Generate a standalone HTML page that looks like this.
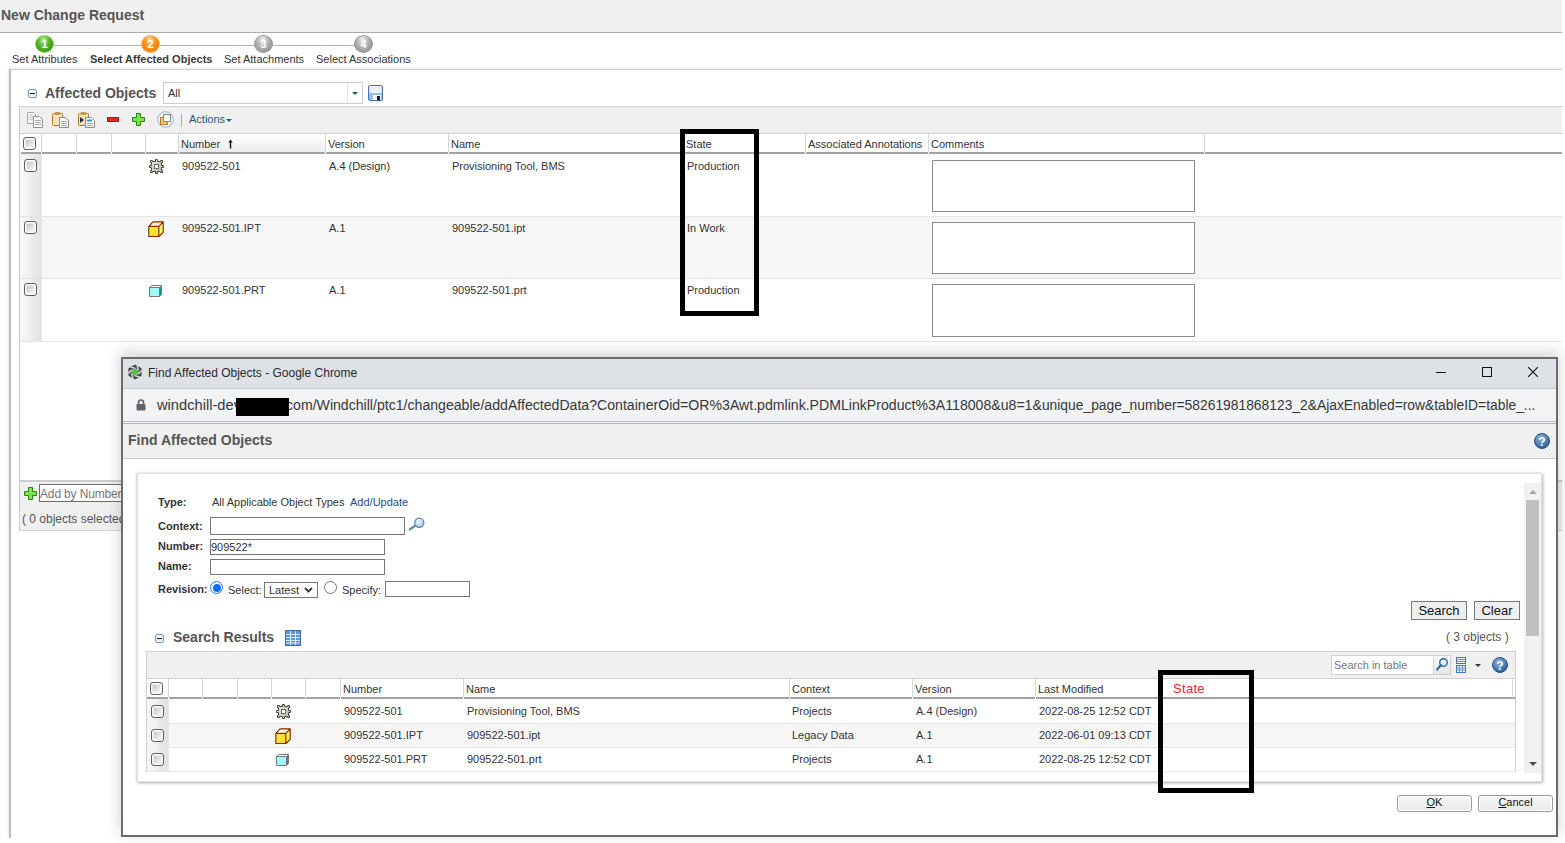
<!DOCTYPE html>
<html><head><meta charset="utf-8">
<style>
*{box-sizing:border-box}
html,body{margin:0;padding:0}
body{width:1565px;height:843px;position:relative;overflow:hidden;background:#fff;font-family:"Liberation Sans",sans-serif;font-size:11px;color:#333}
.a{position:absolute;white-space:nowrap}
.t{line-height:13px}
.cb{position:absolute;width:13px;height:13px;border:1px solid #5f5f5f;border-radius:3px;background:linear-gradient(135deg,#b4b4b4 0%,#dcdcdc 45%,#fdfdfd 100%);box-shadow:inset 0 0 0 1.5px #fff}
.hsep{position:absolute;width:1px;background:#d6d6d6}
.hb{position:absolute;height:3px;background:#a2a2a2;border-bottom:1px solid #dadada}
</style></head><body>
<svg width="0" height="0" style="position:absolute">
<defs>
<symbol id="gear" viewBox="0 0 15 15">
 <defs><linearGradient id="gg" x1="0" y1="0" x2="1" y2="1"><stop offset="0" stop-color="#e6e8e0"/><stop offset="1" stop-color="#b4b9aa"/></linearGradient></defs>
 <path d="M6.5 0.5 L8.5 0.5 L8.5 2.5 L11.5 2.5 L11.5 1.5 L13.5 1.5 L13.5 3.5 L12.5 3.5 L12.5 6.5 L14.5 6.5 L14.5 8.5 L12.5 8.5 L12.5 11.5 L13.5 11.5 L13.5 13.5 L11.5 13.5 L11.5 12.5 L8.5 12.5 L8.5 14.5 L6.5 14.5 L6.5 12.5 L3.5 12.5 L3.5 13.5 L1.5 13.5 L1.5 11.5 L2.5 11.5 L2.5 8.5 L0.5 8.5 L0.5 6.5 L2.5 6.5 L2.5 3.5 L1.5 3.5 L1.5 1.5 L3.5 1.5 L3.5 2.5 L6.5 2.5Z" fill="url(#gg)" stroke="#45453c" stroke-width="1"/>
 <rect x="5.5" y="5.5" width="4" height="4" fill="#fff" stroke="#6d6e62" stroke-width="1"/>
</symbol>
<symbol id="cube" viewBox="0 0 16 16">
 <defs><linearGradient id="cf" x1="0" y1="0" x2="1" y2="1"><stop offset="0" stop-color="#fff04a"/><stop offset="1" stop-color="#f2d21a"/></linearGradient></defs>
 <path d="M0.8 5.5 L5 0.8 L15.2 0.8 L15.2 11.3 L11 16 L0.8 16 Z" fill="url(#cf)"/>
 <path d="M1.3 5.5 L5.2 1.3 L14.5 1.3 L10.8 5.5 Z" fill="#fffbe0"/>
 <path d="M10.8 5.5 L14.7 1.3 L14.7 11.2 L10.8 15.5 Z" fill="#f8ee70"/>
 <path d="M0.8 5.3 L5 0.8 L15.2 0.8 L15.2 11.3 L11 15.5 L0.8 15.5 Z M0.8 5.3 H10.8 V15.5 M10.8 5.3 L15.2 0.8" fill="none" stroke="#8c2800" stroke-width="1.15" stroke-linejoin="round"/>
</symbol>
<symbol id="prt" viewBox="0 0 13 12">
 <path d="M2.5 0.5 H12.5 V9.5 L10.5 11.5 H0.5 V2.5 Z" fill="#9ffcfc"/>
 <path d="M0.8 2.3 L2.5 0.6 H12.3 L10.6 2.3 Z" fill="#fff"/>
 <path d="M10.6 2.3 L12.4 0.6 V9.5 L10.6 11.3 Z" fill="#149a9a"/>
 <path d="M2.5 0.5 H12.5 V9.5 L10.5 11.5 H0.5 V2.5 Z M0.5 2.5 H10.5 V11.5" fill="none" stroke="#777" stroke-width="1"/>
</symbol>
</defs></svg>

<!-- header band -->
<div class="a" style="left:0;top:0;width:1562px;height:33px;background:#f0f0f0;border-bottom:1px solid #ababab"></div>
<div class="a" style="left:1px;top:7px;font-size:14px;font-weight:bold;color:#555;line-height:16px">New Change Request</div>

<!-- wizard -->
<div class="a" style="left:44px;top:45px;width:320px;height:1px;background:#b4b4b4"></div>
<div class="a" style="left:35px;top:35px;width:19px;height:18px;border-radius:50%;border:1px solid #8fd06a;background:radial-gradient(ellipse at 45% 25%,#c8f0a8 0%,#62c032 35%,#3a9e16 70%,#54b820 100%)"></div>
<div class="a" style="left:141px;top:35px;width:19px;height:18px;border-radius:50%;border:1px solid #f8b070;background:radial-gradient(ellipse at 45% 25%,#ffe0b8 0%,#fb9a2a 35%,#f28200 70%,#fbb718 100%)"></div>
<div class="a" style="left:254px;top:35px;width:19px;height:18px;border-radius:50%;border:1px solid #9a9a9a;background:radial-gradient(ellipse at 45% 25%,#f4f4f4 0%,#bdbdbd 35%,#999 70%,#b4b4b4 100%)"></div>
<div class="a" style="left:354px;top:35px;width:19px;height:18px;border-radius:50%;border:1px solid #9a9a9a;background:radial-gradient(ellipse at 45% 25%,#f4f4f4 0%,#bdbdbd 35%,#999 70%,#b4b4b4 100%)"></div>
<div class="a" style="left:35px;top:38px;width:19px;text-align:center;color:#fff;font-weight:bold;font-size:11px;line-height:13px">1</div>
<div class="a" style="left:141px;top:38px;width:19px;text-align:center;color:#fff;font-weight:bold;font-size:11px;line-height:13px">2</div>
<div class="a" style="left:254px;top:38px;width:19px;text-align:center;color:#fff;font-weight:bold;font-size:11px;line-height:13px">3</div>
<div class="a" style="left:354px;top:38px;width:19px;text-align:center;color:#fff;font-weight:bold;font-size:11px;line-height:13px">4</div>
<div class="a t" style="left:12px;top:53px;color:#333">Set Attributes</div>
<div class="a t" style="left:90px;top:53px;color:#3a3a3a;font-weight:bold">Select Affected Objects</div>
<div class="a t" style="left:224px;top:53px;color:#333">Set Attachments</div>
<div class="a t" style="left:316px;top:53px;color:#333">Select Associations</div>

<!-- panel -->
<div class="a" style="left:9px;top:69px;width:1553px;height:769px;border-top:1px solid #cfcfcf;border-left:2px solid #bdbdbd;box-shadow:-1px -1px 2px rgba(0,0,0,.10)"></div>

<!-- panel heading -->
<div class="a" style="left:28px;top:89px;width:9px;height:9px;border:1px solid #6e9cc0;border-radius:2px;background:linear-gradient(#fff 0%,#fff 40%,#d6e8f6 70%,#fff 100%)"></div>
<div class="a" style="left:30px;top:93px;width:5px;height:1px;background:#1a1a1a"></div>
<div class="a" style="left:45px;top:85px;font-size:14px;font-weight:bold;color:#555;line-height:16px">Affected Objects</div>
<div class="a" style="left:163px;top:82px;width:200px;height:22px;border:1px solid #cdcdcd;background:#fff"></div>
<div class="a t" style="left:168px;top:87px;color:#333">All</div>
<div class="a" style="left:347px;top:83px;width:1px;height:20px;background:#e2e2e2"></div>
<div class="a" style="left:352px;top:92px;width:0;height:0;border-left:3px solid transparent;border-right:3px solid transparent;border-top:3px solid #1d5a78"></div>
<!-- save icon -->
<svg class="a" style="left:368px;top:85px" width="15" height="16" viewBox="0 0 15 16"><rect x="0.5" y="0.5" width="14" height="15" rx="1.5" fill="#9ebde6" stroke="#4a76b4"/><rect x="1.5" y="1" width="12" height="7" fill="#fff"/><rect x="2" y="1.5" width="11" height="6" fill="#e9eef7"/><rect x="5" y="10" width="8" height="5" fill="#fff"/><rect x="9" y="11" width="3" height="4.5" fill="#0d1a33"/></svg>

<!-- table frame -->
<div class="a" style="left:19px;top:106px;width:1543px;height:425px;border-left:1px solid #cbcbcb"></div>
<!-- toolbar -->
<div class="a" style="left:20px;top:106px;width:1542px;height:27px;background:#f0f0f0;border-top:1px solid #d0d0d0"></div>
<!-- toolbar icons -->
<svg class="a" style="left:26px;top:112px" width="18" height="16" viewBox="0 0 18 16">
 <path d="M1.5 0.5h6l2 2v9h-8z" fill="#f7f7f7" stroke="#a9a9a9"/><path d="M3 3.5h4M3 5.5h4M3 7.5h4" stroke="#c8c8c8"/><path d="M7.5 4.5h6l3 3v8h-9z" fill="#fff" stroke="#8f8f8f"/><path d="M9 8.5h6M9 10.5h6M9 12.5h6" stroke="#a8a8a8"/>
</svg>
<svg class="a" style="left:52px;top:112px" width="18" height="16" viewBox="0 0 18 16">
 <rect x="0.5" y="1.5" width="10" height="12" rx="1" fill="#f8e2b8" stroke="#b37a2a"/><rect x="3" y="0" width="5" height="3" fill="#c9964a"/><path d="M7.5 5.5h6l3 3v7h-9z" fill="#fff" stroke="#8a8a8a"/><path d="M9 9.5h6M9 11.5h6M9 13.5h6" stroke="#aaa"/>
</svg>
<svg class="a" style="left:78px;top:112px" width="18" height="16" viewBox="0 0 18 16">
 <rect x="0.5" y="1.5" width="10" height="12" rx="1" fill="#f8e2b8" stroke="#b37a2a"/><rect x="3" y="0" width="5" height="3" fill="#c9964a"/><path d="M2 5l4 3-4 3z" fill="#1e2f4a"/><path d="M7.5 5.5h6l3 3v7h-9z" fill="#fff" stroke="#8a8a8a"/><rect x="9" y="7.5" width="5" height="2" fill="#3c8ad6"/><path d="M9 11.5h6M9 13.5h6" stroke="#aaa"/>
</svg>
<div class="a" style="left:107px;top:117px;width:12px;height:5px;background:#e3262b;border:1px solid #b31217"></div>
<svg class="a" style="left:132px;top:113px" width="13" height="13" viewBox="0 0 13 13"><path d="M4.5 0.5h4v4h4v4h-4v4h-4v-4h-4v-4h4z" fill="#7ee34a" stroke="#1d8a16"/></svg>
<svg class="a" style="left:157px;top:111px" width="17" height="17" viewBox="0 0 17 17"><circle cx="8.5" cy="8.5" r="7.8" fill="#eef2f7" stroke="#9ab0c8"/><rect x="3.5" y="6.5" width="7" height="7" fill="#f4c56c" stroke="#b78227"/><rect x="6.5" y="3.5" width="7" height="7" fill="#fff" stroke="#7d8fa5"/></svg>
<div class="a" style="left:181px;top:114px;width:1px;height:13px;background:#8eb3d9"></div>
<div class="a t" style="left:189px;top:113px;color:#2b5682">Actions</div>
<div class="a" style="left:226px;top:119px;width:0;height:0;border-left:3px solid transparent;border-right:3px solid transparent;border-top:3px solid #2b5682"></div>

<!-- header row -->
<div class="a" style="left:20px;top:133px;width:1542px;height:1px;background:#d0d0d0"></div>
<div class="a" style="left:179px;top:134px;width:146px;height:18px;background:linear-gradient(#fff,#ececec)"></div>
<div class="hb" style="left:20px;top:152px;width:1542px"></div>
<div class="hsep" style="left:41px;top:134px;height:20px"></div>
<div class="hsep" style="left:76px;top:134px;height:20px"></div>
<div class="hsep" style="left:111px;top:134px;height:20px"></div>
<div class="hsep" style="left:145px;top:134px;height:20px"></div>
<div class="hsep" style="left:178px;top:134px;height:20px"></div>
<div class="hsep" style="left:325px;top:134px;height:20px"></div>
<div class="hsep" style="left:448px;top:134px;height:20px"></div>
<div class="hsep" style="left:682px;top:134px;height:20px"></div>
<div class="hsep" style="left:805px;top:134px;height:20px"></div>
<div class="hsep" style="left:928px;top:134px;height:20px"></div>
<div class="hsep" style="left:1204px;top:134px;height:20px"></div>
<div class="a" style="left:41px;top:152px;width:1px;height:3px;background:#fff"></div><div class="a" style="left:76px;top:152px;width:1px;height:3px;background:#fff"></div><div class="a" style="left:111px;top:152px;width:1px;height:3px;background:#fff"></div><div class="a" style="left:145px;top:152px;width:1px;height:3px;background:#fff"></div><div class="a" style="left:178px;top:152px;width:1px;height:3px;background:#fff"></div><div class="a" style="left:325px;top:152px;width:1px;height:3px;background:#fff"></div><div class="a" style="left:448px;top:152px;width:1px;height:3px;background:#fff"></div><div class="a" style="left:805px;top:152px;width:1px;height:3px;background:#fff"></div><div class="a" style="left:928px;top:152px;width:1px;height:3px;background:#fff"></div><div class="a" style="left:1204px;top:152px;width:1px;height:3px;background:#fff"></div>
<div class="a" style="left:20px;top:152px;width:1px;height:3px;background:#fff"></div>
<div class="cb" style="left:23px;top:137px"></div>
<div class="a t" style="left:181px;top:138px">Number</div>
<svg class="a" style="left:228px;top:139px" width="5" height="10" viewBox="0 0 5 10"><path d="M2.5 0.5L0.3 3.5H1.8V9.5H3.2V3.5H4.7Z" fill="#111"/></svg>
<div class="a t" style="left:328px;top:138px">Version</div>
<div class="a t" style="left:451px;top:138px">Name</div>
<div class="a t" style="left:686px;top:138px">State</div>
<div class="a t" style="left:808px;top:138px">Associated Annotations</div>
<div class="a t" style="left:931px;top:138px">Comments</div>

<!-- rows -->
<div class="a" style="left:20px;top:154px;width:1542px;height:63px;background:#fff;border-bottom:1px solid #e4e4e4"></div>
<div class="a" style="left:20px;top:217px;width:1542px;height:62px;background:#f6f6f6;border-bottom:1px solid #e4e4e4"></div>
<div class="a" style="left:20px;top:279px;width:1542px;height:63px;background:#fff;border-bottom:1px solid #e4e4e4"></div>
<div class="a" style="left:20px;top:154px;width:22px;height:187px;background:linear-gradient(90deg,#f7f7f7 0%,#f1f1f1 40%,#e9e9eb 60%,#e4e4e6 92%,#d8d8d8 96%,#fff 100%)"></div>
<div class="a" style="left:20px;top:216px;width:22px;height:1px;background:#e4e4e4"></div>
<div class="a" style="left:20px;top:278px;width:22px;height:1px;background:#e4e4e4"></div>
<div class="cb" style="left:24px;top:159px"></div>
<div class="cb" style="left:24px;top:221px"></div>
<div class="cb" style="left:24px;top:283px"></div>

<div class="a t" style="left:182px;top:160px">909522-501</div>
<div class="a t" style="left:329px;top:160px">A.4 (Design)</div>
<div class="a t" style="left:452px;top:160px">Provisioning Tool, BMS</div>
<div class="a t" style="left:687px;top:160px">Production</div>
<div class="a t" style="left:182px;top:222px">909522-501.IPT</div>
<div class="a t" style="left:329px;top:222px">A.1</div>
<div class="a t" style="left:452px;top:222px">909522-501.ipt</div>
<div class="a t" style="left:687px;top:222px">In Work</div>
<div class="a t" style="left:182px;top:284px">909522-501.PRT</div>
<div class="a t" style="left:329px;top:284px">A.1</div>
<div class="a t" style="left:452px;top:284px">909522-501.prt</div>
<div class="a t" style="left:687px;top:284px">Production</div>

<div class="a" style="left:932px;top:160px;width:263px;height:52px;border:1px solid #8c8c8c;background:#fff"></div>
<div class="a" style="left:932px;top:222px;width:263px;height:52px;border:1px solid #8c8c8c;background:#fff"></div>
<div class="a" style="left:932px;top:284px;width:263px;height:53px;border:1px solid #8c8c8c;background:#fff"></div>

<svg class="a" style="left:149px;top:159px" width="15" height="15"><use href="#gear"/></svg>
<svg class="a" style="left:148px;top:221px" width="16" height="16"><use href="#cube"/></svg>
<svg class="a" style="left:149px;top:285px" width="13" height="12"><use href="#prt"/></svg>

<!-- footer -->
<div class="a" style="left:20px;top:480px;width:1542px;height:51px;background:#f0f0f0;border-top:2px solid #cdcdcd;border-bottom:1px solid #d6d6d6"></div>
<svg class="a" style="left:24px;top:487px" width="13" height="13" viewBox="0 0 13 13"><path d="M4.5 0.5h4v4h4v4h-4v4h-4v-4h-4v-4h4z" fill="#7ee34a" stroke="#1d8a16"/></svg>
<div class="a" style="left:39px;top:484px;width:200px;height:18px;border:1px solid #6d6d6d;background:#fff"></div>
<div class="a" style="left:40px;top:487px;font-size:12px;line-height:14px;color:#777;letter-spacing:-0.15px">Add by Number</div>
<div class="a t" style="left:22px;top:512px;font-size:12px;line-height:14px;color:#555">( 0 objects selected )</div>

<!-- black highlight box -->
<div class="a" style="left:680px;top:129px;width:79px;height:187px;border:5px solid #000"></div>


<!-- dialog -->
<div class="a" style="left:121px;top:357px;width:1437px;height:480px;border:2px solid #6b6b6b;background:#fff;box-shadow:0 -4px 14px 1px rgba(0,0,0,.17)"></div>
<div class="a" style="left:123px;top:359px;width:1433px;height:30px;background:#dee1e6;border-bottom:1px solid #c6c8cc"></div>
<svg class="a" style="left:127px;top:364px" width="16" height="16" viewBox="0 0 16 16">
 <path d="M8.00 0.40 L14.58 4.20 L14.58 11.80 L8.00 15.60 L1.42 11.80 L1.42 4.20Z" fill="#454d4c"/>
 <path d="M11.38 6.05 L9.97 1.54 M11.38 9.95 L14.58 6.48 M8.00 11.90 L12.61 12.94 M4.62 9.95 L6.03 14.46 M4.62 6.05 L1.42 9.52 M8.00 4.10 L3.39 3.06 " stroke="#dee1e6" stroke-width="1.3"/>
 <path d="M8.00 4.10 L11.38 6.05 L11.38 9.95 L8.00 11.90 L4.62 9.95 L4.62 6.05Z" fill="#dee1e6"/>
 <path d="M8.00 4.60 L10.94 6.30 L10.94 9.70 L8.00 11.40 L5.06 9.70 L5.06 6.30Z" fill="#5bbd44"/>
</svg>
<div class="a" style="left:148px;top:366px;font-size:12px;line-height:15px;color:#2a2a2a">Find Affected Objects - Google Chrome</div>
<div class="a" style="left:1436px;top:372px;width:10px;height:1px;background:#111"></div>
<div class="a" style="left:1482px;top:367px;width:10px;height:10px;border:1px solid #111"></div>
<svg class="a" style="left:1528px;top:367px" width="10" height="10" viewBox="0 0 10 10"><path d="M0 0L10 10M10 0L0 10" stroke="#111" stroke-width="1.1"/></svg>

<div class="a" style="left:123px;top:389px;width:1433px;height:33px;background:#f1f3f4;border-bottom:1px solid #b9b9b9"></div>
<div class="a" style="left:123px;top:422px;width:1433px;height:2px;background:#f7f7f7;border-bottom:1px solid #b4b4b4"></div>
<svg class="a" style="left:136px;top:399px" width="10" height="12" viewBox="0 0 10 12"><path d="M2.5 5V3.5a2.5 2.5 0 0 1 5 0V5" fill="none" stroke="#5f6368" stroke-width="1.6"/><rect x="0.5" y="5" width="9" height="6.5" rx="1" fill="#5f6368"/></svg>
<svg class="a" style="left:0;top:390px" width="1565" height="30" viewBox="0 0 1565 30">
 <g font-family="Liberation Sans" font-size="14" fill="#36383b">
 <text x="157" y="20" textLength="84" lengthAdjust="spacingAndGlyphs">windchill-dev</text>
 <text x="286" y="20" textLength="523.6" lengthAdjust="spacingAndGlyphs">com/Windchill/ptc1/changeable/addAffectedData?ContainerOid=OR%3Awt.pdmlink.</text>
 <text x="809.6" y="20" textLength="232.3" lengthAdjust="spacingAndGlyphs">PDMLinkProduct%3A118008&amp;u8=1&amp;</text>
 <text x="1041.9" y="20" textLength="493.5" lengthAdjust="spacingAndGlyphs">unique_page_number=58261981868123_2&amp;AjaxEnabled=row&amp;tableID=table_...</text>
 </g>
 <rect x="236" y="8" width="53" height="18" fill="#000"/>
</svg>

<!-- content header -->
<div class="a" style="left:123px;top:424px;width:1433px;height:35px;background:#f0f0f0;border-bottom:1px solid #c9c9c9"></div>
<div class="a" style="left:128px;top:432px;font-size:14px;font-weight:bold;color:#555;line-height:16px">Find Affected Objects</div>
<svg class="a" style="left:1534px;top:433px" width="16" height="16" viewBox="0 0 16 16"><defs><radialGradient id="hg" cx="40%" cy="30%" r="70%"><stop offset="0" stop-color="#8fb6dc"/><stop offset="1" stop-color="#2a5f99"/></radialGradient></defs><circle cx="8" cy="8" r="7.5" fill="url(#hg)" stroke="#24528a" stroke-width="1"/><text x="8" y="12.5" text-anchor="middle" font-family="Liberation Sans" font-weight="bold" font-size="12" fill="#fff">?</text></svg>

<!-- inner container -->
<div class="a" style="left:137px;top:473px;width:1405px;height:309px;background:#fff;border:1px solid #e2e2e2;box-shadow:1px 1px 3px rgba(0,0,0,.3),-1px 0 2px rgba(0,0,0,.12)"></div>
<!-- scrollbar -->
<div class="a" style="left:1524px;top:483px;width:17px;height:290px;background:#f1f1f1"></div>
<div class="a" style="left:1526px;top:500px;width:13px;height:136px;background:#c1c1c1"></div>
<div class="a" style="left:1529px;top:490px;width:0;height:0;border-left:4px solid transparent;border-right:4px solid transparent;border-bottom:4px solid #a3a3a3"></div>
<div class="a" style="left:1529px;top:762px;width:0;height:0;border-left:4px solid transparent;border-right:4px solid transparent;border-top:4px solid #505050"></div>

<!-- form -->
<div class="a t" style="left:158px;top:496px;font-weight:bold">Type:</div>
<div class="a t" style="left:212px;top:496px">All Applicable Object Types</div>
<div class="a t" style="left:350px;top:496px;color:#1e4f86">Add/Update</div>
<div class="a t" style="left:158px;top:520px;font-weight:bold">Context:</div>
<div class="a" style="left:210px;top:517px;width:195px;height:18px;border:1px solid #767676;background:#fff"></div>
<svg class="a" style="left:408px;top:517px" width="17" height="14" viewBox="0 0 17 14"><defs><radialGradient id="lg" cx="40%" cy="35%" r="70%"><stop offset="0" stop-color="#f4faff"/><stop offset="1" stop-color="#9cc3e8"/></radialGradient></defs><path d="M2 12.3L6.8 9" stroke="#5f8db5" stroke-width="2.4" stroke-linecap="round"/><circle cx="11.3" cy="5.7" r="4.6" fill="url(#lg)" stroke="#5a86ad" stroke-width="1.2"/></svg>
<div class="a t" style="left:158px;top:540px;font-weight:bold">Number:</div>
<div class="a" style="left:210px;top:539px;width:175px;height:16px;border:1px solid #767676;background:#fff"></div>
<div class="a t" style="left:211px;top:541px">909522*</div>
<div class="a t" style="left:158px;top:560px;font-weight:bold">Name:</div>
<div class="a" style="left:210px;top:559px;width:175px;height:16px;border:1px solid #767676;background:#fff"></div>
<div class="a t" style="left:158px;top:583px;font-weight:bold">Revision:</div>
<div class="a" style="left:210px;top:581px;width:13px;height:13px;border-radius:50%;border:1.5px solid #1a73ff;background:#fff"></div>
<div class="a" style="left:212.5px;top:583.5px;width:8px;height:8px;border-radius:50%;background:#0a6cff"></div>
<div class="a t" style="left:228px;top:584px">Select:</div>
<div class="a" style="left:264px;top:582px;width:54px;height:16px;border:1px solid #767676;background:#fff"></div>
<div class="a t" style="left:269px;top:584px">Latest</div>
<svg class="a" style="left:304px;top:587px" width="9" height="6" viewBox="0 0 9 6"><path d="M1 1l3.5 3.5L8 1" fill="none" stroke="#333" stroke-width="1.9"/></svg>
<div class="a" style="left:324px;top:581px;width:13px;height:13px;border-radius:50%;border:1px solid #767676;background:#fff"></div>
<div class="a t" style="left:342px;top:584px">Specify:</div>
<div class="a" style="left:385px;top:581px;width:85px;height:16px;border:1px solid #767676;background:#fff"></div>

<div class="a" style="left:1411px;top:601px;width:56px;height:19px;border:1px solid #7a7a7a;background:#efefef"></div>
<div class="a" style="left:1411px;top:603px;width:56px;text-align:center;font-size:13px;line-height:16px;color:#111">Search</div>
<div class="a" style="left:1474px;top:601px;width:46px;height:19px;border:1px solid #7a7a7a;background:#efefef"></div>
<div class="a" style="left:1474px;top:603px;width:46px;text-align:center;font-size:13px;line-height:16px;color:#111">Clear</div>

<!-- search results -->
<div class="a" style="left:155px;top:634px;width:9px;height:9px;border:1px solid #6e9cc0;border-radius:2px;background:linear-gradient(#fff 0%,#fff 40%,#d6e8f6 70%,#fff 100%)"></div>
<div class="a" style="left:157px;top:638px;width:5px;height:1px;background:#1a1a1a"></div>
<div class="a" style="left:173px;top:629px;font-size:14px;font-weight:bold;color:#555;line-height:16px">Search Results</div>
<svg class="a" style="left:285px;top:630px" width="16" height="16" viewBox="0 0 16 16"><rect x="0.5" y="0.5" width="15" height="15" fill="#5f95d0" stroke="#3f6fa8"/><path d="M1 4.5h14M1 7.5h14M1 10.5h14M1 13h14" stroke="#dbe8f6"/><path d="M5.5 1v14M10.5 1v14" stroke="#dbe8f6"/></svg>
<div class="a t" style="left:1446px;top:630px;font-size:12px;line-height:14px;color:#555">( 3 objects )</div>

<!-- results table -->
<div class="a" style="left:146px;top:651px;width:1370px;height:121px;border-left:1px solid #d0d0d0;border-right:1px solid #d0d0d0"></div>
<div class="a" style="left:147px;top:651px;width:1368px;height:27px;background:#f0f0f0;border-top:1px solid #d0d0d0"></div>
<div class="a" style="left:1331px;top:655px;width:103px;height:20px;border:1px solid #d3d3d3;background:#fff"></div>
<div class="a t" style="left:1334px;top:659px;color:#777">Search in table</div>
<div class="a" style="left:1433px;top:655px;width:18px;height:20px;border:1px solid #d0d0d0;background:linear-gradient(#fafafa,#e6e6e6)"></div>
<svg class="a" style="left:1435px;top:657px" width="14" height="14" viewBox="0 0 14 14"><circle cx="8.5" cy="5.5" r="3.8" fill="#e6f0fa" stroke="#2d66a8" stroke-width="1.4"/><path d="M6 8L2 12.5" stroke="#2d66a8" stroke-width="2" stroke-linecap="round"/></svg>
<svg class="a" style="left:1456px;top:657px" width="10" height="16" viewBox="0 0 10 16"><rect x="0.5" y="0.5" width="9" height="6" fill="#fff" stroke="#3f78b8"/><path d="M1 2.5h8M1 4.5h8" stroke="#5f95d0"/><rect x="0.5" y="8.5" width="9" height="7" fill="#fff" stroke="#3f78b8"/><path d="M1 11h8M1 13h8M3.5 9v6M6.5 9v6" stroke="#5f95d0"/></svg>
<div class="a" style="left:1475px;top:664px;width:0;height:0;border-left:3px solid transparent;border-right:3px solid transparent;border-top:3px solid #333"></div>
<svg class="a" style="left:1492px;top:657px" width="16" height="16" viewBox="0 0 16 16"><circle cx="8" cy="8" r="7.5" fill="url(#hg)" stroke="#24528a" stroke-width="1"/><text x="8" y="12.5" text-anchor="middle" font-family="Liberation Sans" font-weight="bold" font-size="12" fill="#fff">?</text></svg>

<div class="a" style="left:147px;top:678px;width:1368px;height:1px;background:#d0d0d0"></div>
<div class="hb" style="left:147px;top:697px;width:1368px"></div>
<div class="hsep" style="left:168px;top:679px;height:19px"></div>
<div class="hsep" style="left:202px;top:679px;height:19px"></div>
<div class="hsep" style="left:237px;top:679px;height:19px"></div>
<div class="hsep" style="left:271px;top:679px;height:19px"></div>
<div class="hsep" style="left:305px;top:679px;height:19px"></div>
<div class="hsep" style="left:340px;top:679px;height:19px"></div>
<div class="hsep" style="left:463px;top:679px;height:19px"></div>
<div class="hsep" style="left:789px;top:679px;height:19px"></div>
<div class="hsep" style="left:912px;top:679px;height:19px"></div>
<div class="hsep" style="left:1035px;top:679px;height:19px"></div>
<div class="hsep" style="left:1512px;top:679px;height:19px"></div>
<div class="a" style="left:168px;top:697px;width:1px;height:3px;background:#fff"></div><div class="a" style="left:202px;top:697px;width:1px;height:3px;background:#fff"></div><div class="a" style="left:237px;top:697px;width:1px;height:3px;background:#fff"></div><div class="a" style="left:271px;top:697px;width:1px;height:3px;background:#fff"></div><div class="a" style="left:305px;top:697px;width:1px;height:3px;background:#fff"></div><div class="a" style="left:340px;top:697px;width:1px;height:3px;background:#fff"></div><div class="a" style="left:463px;top:697px;width:1px;height:3px;background:#fff"></div><div class="a" style="left:789px;top:697px;width:1px;height:3px;background:#fff"></div><div class="a" style="left:912px;top:697px;width:1px;height:3px;background:#fff"></div><div class="a" style="left:1035px;top:697px;width:1px;height:3px;background:#fff"></div>
<div class="cb" style="left:150px;top:682px"></div>
<div class="a t" style="left:343px;top:683px">Number</div>
<div class="a t" style="left:466px;top:683px">Name</div>
<div class="a t" style="left:792px;top:683px">Context</div>
<div class="a t" style="left:915px;top:683px">Version</div>
<div class="a t" style="left:1038px;top:683px">Last Modified</div>
<div class="a" style="left:1173px;top:681px;font-size:13px;line-height:16px;color:#ee1f2b;letter-spacing:0.3px">State</div>

<div class="a" style="left:147px;top:699px;width:1368px;height:25px;background:#fff;border-bottom:1px solid #e6e6e6"></div>
<div class="a" style="left:147px;top:724px;width:1368px;height:24px;background:#f6f6f6;border-bottom:1px solid #e6e6e6"></div>
<div class="a" style="left:147px;top:748px;width:1368px;height:24px;background:#fff;border-bottom:1px solid #e6e6e6"></div>
<div class="a" style="left:147px;top:699px;width:22px;height:72px;background:linear-gradient(90deg,#f7f7f7 0%,#f1f1f1 40%,#e9e9eb 60%,#e4e4e6 92%,#d8d8d8 96%,#fff 100%)"></div>
<div class="cb" style="left:151px;top:705px"></div>
<div class="cb" style="left:151px;top:729px"></div>
<div class="cb" style="left:151px;top:753px"></div>
<div class="a t" style="left:344px;top:705px">909522-501</div>
<div class="a t" style="left:467px;top:705px">Provisioning Tool, BMS</div>
<div class="a t" style="left:792px;top:705px">Projects</div>
<div class="a t" style="left:916px;top:705px">A.4 (Design)</div>
<div class="a t" style="left:1039px;top:705px">2022-08-25 12:52 CDT</div>
<div class="a t" style="left:344px;top:729px">909522-501.IPT</div>
<div class="a t" style="left:467px;top:729px">909522-501.ipt</div>
<div class="a t" style="left:792px;top:729px">Legacy Data</div>
<div class="a t" style="left:916px;top:729px">A.1</div>
<div class="a t" style="left:1039px;top:729px">2022-06-01 09:13 CDT</div>
<div class="a t" style="left:344px;top:753px">909522-501.PRT</div>
<div class="a t" style="left:467px;top:753px">909522-501.prt</div>
<div class="a t" style="left:792px;top:753px">Projects</div>
<div class="a t" style="left:916px;top:753px">A.1</div>
<div class="a t" style="left:1039px;top:753px">2022-08-25 12:52 CDT</div>

<svg class="a" style="left:276px;top:704px" width="15" height="15"><use href="#gear"/></svg>
<svg class="a" style="left:275px;top:728px" width="16" height="16"><use href="#cube"/></svg>
<svg class="a" style="left:276px;top:754px" width="13" height="12"><use href="#prt"/></svg>

<!-- OK / Cancel -->
<div class="a" style="left:1397px;top:795px;width:75px;height:17px;border:1px solid #9a9a9a;border-radius:3px;background:linear-gradient(#f7f7f7,#e9e9e9);box-shadow:inset 0 0 0 1px #fff"></div>
<div class="a t" style="left:1397px;top:796px;width:75px;text-align:center;color:#111"><u>O</u>K</div>
<div class="a" style="left:1478px;top:795px;width:75px;height:17px;border:1px solid #9a9a9a;border-radius:3px;background:linear-gradient(#f7f7f7,#e9e9e9);box-shadow:inset 0 0 0 1px #fff"></div>
<div class="a t" style="left:1478px;top:796px;width:75px;text-align:center;color:#111"><u>C</u>ancel</div>

<!-- black highlight box 2 -->
<div class="a" style="left:1158px;top:670px;width:96px;height:123px;border:5px solid #000"></div>


</body></html>
